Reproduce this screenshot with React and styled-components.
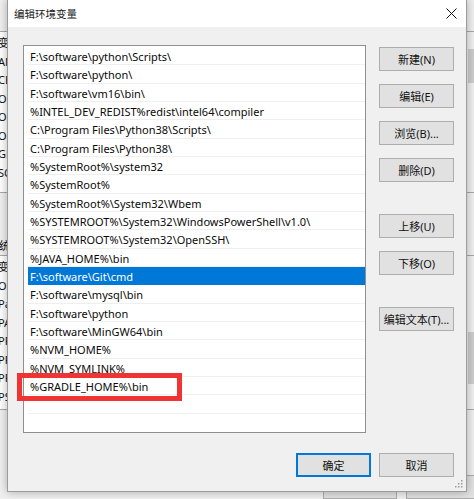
import styled, { createGlobalStyle } from "styled-components";

const GlobalStyle = createGlobalStyle`
  body {
    margin: 0;
    background: #f0f0f0;
    font-family: "Noto Sans", "Noto Sans CJK SC", sans-serif;
  }
`;

const paths = [
  "F:\\software\\python\\Scripts\\",
  "F:\\software\\python\\",
  "F:\\software\\vm16\\bin\\",
  "%INTEL_DEV_REDIST%redist\\intel64\\compiler",
  "C:\\Program Files\\Python38\\Scripts\\",
  "C:\\Program Files\\Python38\\",
  "%SystemRoot%\\system32",
  "%SystemRoot%",
  "%SystemRoot%\\System32\\Wbem",
  "%SYSTEMROOT%\\System32\\WindowsPowerShell\\v1.0\\",
  "%SYSTEMROOT%\\System32\\OpenSSH\\",
  "%JAVA_HOME%\\bin",
  "F:\\software\\Git\\cmd",
  "F:\\software\\mysql\\bin",
  "F:\\software\\python",
  "F:\\software\\MinGW64\\bin",
  "%NVM_HOME%",
  "%NVM_SYMLINK%",
  "%GRADLE_HOME%\\bin",
  "",
];

// the window behind the dialog: only the first letters peek out on the left
const userVars = ["变", "AN", "CL", "On", "On", "On", "GR", "SC"];
const sysVars = ["变", "OS", "Pa", "PA", "PR", "PR", "PR", "PS"];

const App = () => {
  return (
    <>
      <GlobalStyle />
      <Desktop>
        <BackWindow>
          <BackList $height={169} $top={31}>
            <BackRows>
              {userVars.map((v, i) => (
                <BackRow key={i}>
                  <NameCell>{v}</NameCell>
                </BackRow>
              ))}
            </BackRows>
            <ScrollTrack>
              <Thumb $top={17} $height={34} />
            </ScrollTrack>
          </BackList>
          <SectionLabel>系统</SectionLabel>
          <BackList $height={161} $top={2}>
            <BackRows>
              {sysVars.map((v, i) => (
                <BackRow key={i}>
                  <NameCell>{v}</NameCell>
                </BackRow>
              ))}
            </BackRows>
            <ScrollTrack>
              <Thumb $top={76} $height={52} />
            </ScrollTrack>
          </BackList>
          <BackButtons>
            <BackButton />
            <BackButton />
          </BackButtons>
        </BackWindow>

        <Dialog>
          <TitleBar>
            <Title>编辑环境变量</Title>
            <CloseIcon width="11" height="11" viewBox="0 0 11 11">
              <path d="M0.5 0.5 L10.5 10.5 M10.5 0.5 L0.5 10.5" stroke="#111" strokeWidth="1" />
            </CloseIcon>
          </TitleBar>
          <Body>
            <PathList>
              {paths.map((p, i) => (
                <PathRow key={i} $selected={i === 12}>
                  {p}
                </PathRow>
              ))}
            </PathList>
            <ButtonColumn>
              <Button>新建(N)</Button>
              <Button>编辑(E)</Button>
              <Button>浏览(B)...</Button>
              <Button>删除(D)</Button>
              <Button $gap={32}>上移(U)</Button>
              <Button>下移(O)</Button>
              <Button $gap={32}>编辑文本(T)...</Button>
            </ButtonColumn>
            <Footer>
              <Button $primary>确定</Button>
              <Button>取消</Button>
            </Footer>
          </Body>
          <Grip width="8" height="8" viewBox="0 0 8 8">
            <rect x="6" y="0" width="1.5" height="1.5" fill="#9a9a9a" />
            <rect x="3" y="3" width="1.5" height="1.5" fill="#9a9a9a" />
            <rect x="6" y="3" width="1.5" height="1.5" fill="#9a9a9a" />
            <rect x="0" y="6" width="1.5" height="1.5" fill="#9a9a9a" />
            <rect x="3" y="6" width="1.5" height="1.5" fill="#9a9a9a" />
            <rect x="6" y="6" width="1.5" height="1.5" fill="#9a9a9a" />
          </Grip>
          <Highlight />
        </Dialog>
      </Desktop>
    </>
  );
};

export default App;

const Desktop = styled.div`
  position: relative;
  width: 474px;
  height: 499px;
  overflow: hidden;
  background: #f0f0f0;
`;

const BackWindow = styled.div`
  position: absolute;
  left: -28px;
  top: 0;
  width: 530px;
  height: 499px;
  display: flex;
  flex-direction: column;
  background: #f0f0f0;
  font-size: 11px;
  color: #111;
`;

const BackList = styled.div`
  display: flex;
  margin: ${(p) => p.$top}px 18px 0 10px;
  height: ${(p) => p.$height}px;
  border: 1px solid #a9a9a9;
  background: #fff;
`;

const BackRows = styled.div`
  flex: 1;
  padding-top: 2px;
`;

const BackRow = styled.div`
  height: 18.5px;
  line-height: 18.5px;
  padding-left: 15px;
`;

const NameCell = styled.div`
  width: 9px;
  overflow: hidden;
  white-space: nowrap;
`;

const ScrollTrack = styled.div`
  position: relative;
  width: 17px;
  background: #f0f0f0;
  border-left: 1px solid #e6e6e6;
`;

const Thumb = styled.div`
  position: absolute;
  left: 2px;
  right: 2px;
  top: ${(p) => p.$top}px;
  height: ${(p) => p.$height}px;
  background: #cdcdcd;
`;

const SectionLabel = styled.div`
  margin: 45px 0 0 16px;
  width: 22px;
  height: 16px;
  line-height: 16px;
  overflow: hidden;
  white-space: nowrap;
`;

const BackButtons = styled.div`
  display: flex;
  justify-content: flex-end;
  gap: 9px;
  margin: 65px 22px 0 0;
`;

const BackButton = styled.div`
  width: 74px;
  height: 24px;
  background: #e1e1e1;
  border: 1px solid #adadad;
  box-sizing: border-box;
`;

const Dialog = styled.div`
  position: absolute;
  left: 7px;
  top: -1px;
  width: 460px;
  box-sizing: border-box;
  border: 1px solid #9b9b9b;
  background: #f0f0f0;
  box-shadow: 0 0 9px rgba(0, 0, 0, 0.3);
  display: flex;
  flex-direction: column;
`;

const TitleBar = styled.div`
  height: 27px;
  background: #fff;
  display: flex;
  align-items: center;
  justify-content: space-between;
  padding: 0 8px 1px 6px;
  box-sizing: border-box;
`;

const Title = styled.span`
  font-size: 10.5px;
  color: #222;
`;

const CloseIcon = styled.svg`
  display: block;
  margin-right: 1px;
`;

const Body = styled.div`
  display: grid;
  grid-template-columns: 343px 75px;
  column-gap: 13px;
  row-gap: 20px;
  padding: 18px 12px 14px 15px;
`;

const PathList = styled.div`
  height: 388px;
  box-sizing: border-box;
  border: 1px solid #8f8f8f;
  background: #fff;
  padding: 1px 0 0 4px;
`;

const PathRow = styled.div`
  height: 18.33px;
  line-height: 19px;
  box-sizing: border-box;
  padding-left: 2px;
  font-size: 11px;
  white-space: nowrap;
  overflow: hidden;
  color: ${(p) => (p.$selected ? "#fff" : "#0a0a0a")};
  background: ${(p) => (p.$selected ? "#0078d7" : "transparent")};
  border-bottom: 1px solid ${(p) => (p.$selected ? "#0078d7" : "#efefef")};
`;

const ButtonColumn = styled.div`
  display: flex;
  flex-direction: column;
  padding-top: 2px;
`;

const Button = styled.div`
  width: 75px;
  height: 24px;
  box-sizing: border-box;
  margin-top: ${(p) => (p.$gap ? p.$gap : 13)}px;
  &:first-child {
    margin-top: 0;
  }
  background: #e1e1e1;
  border: ${(p) => (p.$primary ? "2px solid #0078d7" : "1px solid #adadad")};
  display: flex;
  align-items: center;
  justify-content: center;
  font-size: 11px;
  color: #111;
  white-space: nowrap;
`;

const Footer = styled.div`
  grid-column: 1 / 3;
  display: flex;
  justify-content: flex-end;
  gap: 8px;

  & > div {
    margin-top: 0;
  }
`;

const Grip = styled.svg`
  position: absolute;
  right: 3px;
  bottom: 3px;
`;

const Highlight = styled.div`
  position: absolute;
  left: 9px;
  top: 373px;
  width: 165px;
  height: 28px;
  box-sizing: border-box;
  border: 5px solid #f03434;
`;
